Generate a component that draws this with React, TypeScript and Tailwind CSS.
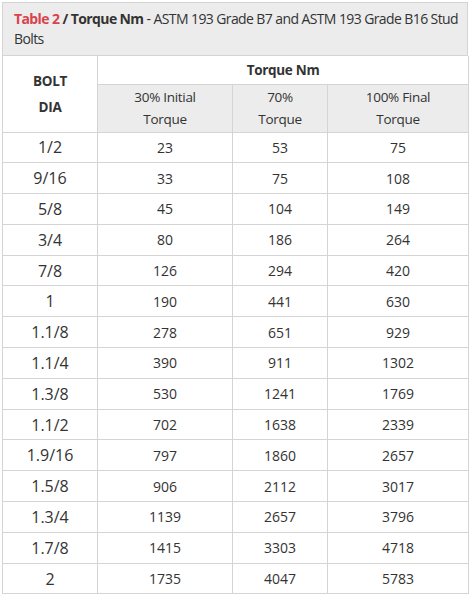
import React from "react";

const rows: [string, string, string, string][] = [
  ["1/2", "23", "53", "75"],
  ["9/16", "33", "75", "108"],
  ["5/8", "45", "104", "149"],
  ["3/4", "80", "186", "264"],
  ["7/8", "126", "294", "420"],
  ["1", "190", "441", "630"],
  ["1.1/8", "278", "651", "929"],
  ["1.1/4", "390", "911", "1302"],
  ["1.3/8", "530", "1241", "1769"],
  ["1.1/2", "702", "1638", "2339"],
  ["1.9/16", "797", "1860", "2657"],
  ["1.5/8", "906", "2112", "3017"],
  ["1.3/4", "1139", "2657", "3796"],
  ["1.7/8", "1415", "3303", "4718"],
  ["2", "1735", "4047", "5783"],
];

export default function App() {
  return (
    <div
      className="w-[474px] h-[594px] overflow-hidden bg-white pt-[2px] pl-[2px] text-[#333]"
      style={{ fontFamily: '"Open Sans", "Noto Sans", sans-serif' }}
    >
      <div className="w-[466px]">
        <div className="bg-[#ececec] border border-[#d4d4d4] h-[54px] pl-[11px] pr-[1px] pt-[6px] text-[14px] leading-[20px] tracking-[-0.6px]">
          <span className="font-bold text-[#d9434d]">Table 2</span>{" "}
          <span className="font-bold">/ Torque Nm</span> - ASTM 193 Grade B7 and ASTM 193 Grade B16 Stud Bolts
        </div>
        <table className="w-[466px] table-fixed border-collapse text-center">
          <colgroup>
            <col className="w-[95px]" />
            <col className="w-[135px]" />
            <col className="w-[95px]" />
            <col className="w-[141px]" />
          </colgroup>
          <thead>
            <tr className="h-[28px]">
              <th
                rowSpan={2}
                className="border border-t-0 border-[#d4d4d4] bg-white font-bold text-[13.5px] leading-[26px] tracking-[-0.3px]"
              >
                BOLT
                <br />
                DIA
              </th>
              <th
                colSpan={3}
                className="border border-t-0 border-[#d4d4d4] bg-white font-bold text-[13.5px] tracking-[-0.3px]"
              >
                Torque Nm
              </th>
            </tr>
            <tr className="h-[48px]">
              <th className="border border-[#d4d4d4] bg-[#ececec] font-normal text-[13.5px] leading-[22px] tracking-[-0.3px]">
                30% Initial
                <br />
                Torque
              </th>
              <th className="border border-[#d4d4d4] bg-[#ececec] font-normal text-[13.5px] leading-[22px] tracking-[-0.3px]">
                70%
                <br />
                Torque
              </th>
              <th className="border border-[#d4d4d4] bg-[#ececec] font-normal text-[13.5px] leading-[22px] tracking-[-0.3px]">
                100% Final
                <br />
                Torque
              </th>
            </tr>
          </thead>
          <tbody>
            {rows.map((r) => (
              <tr key={r[0]} className="h-[30.8px]">
                <td className="border border-[#d4d4d4] text-[16px] p-0">{r[0]}</td>
                <td className="border border-[#d4d4d4] text-[14px] p-0">{r[1]}</td>
                <td className="border border-[#d4d4d4] text-[14px] p-0">{r[2]}</td>
                <td className="border border-[#d4d4d4] text-[14px] p-0">{r[3]}</td>
              </tr>
            ))}
          </tbody>
        </table>
      </div>
    </div>
  );
}
